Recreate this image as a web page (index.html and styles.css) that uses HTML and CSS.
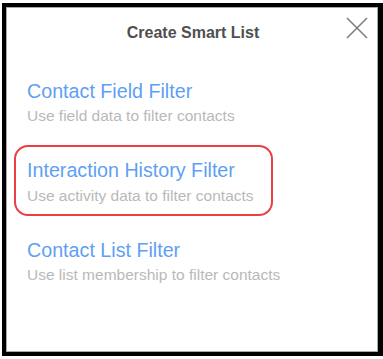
FILE: index.html
```html
<!DOCTYPE html>
<html>
<head>
<meta charset="utf-8">
<link rel="stylesheet" href="styles.css">
</head>
<body>
<div class="frame">
  <div class="dialog">
    <div class="header">
      <h1 class="title">Create Smart List</h1>
      <button class="close" aria-label="Close">
        <svg width="22" height="22" viewBox="0 0 22 22"><path d="M1 1 L21 21 M21 1 L1 21" stroke="#7a7a7a" stroke-width="1.5" fill="none"/></svg>
      </button>
    </div>
    <ul class="options">
      <li class="option">
        <div class="option-title">Contact Field Filter</div>
        <div class="option-desc">Use field data to filter contacts</div>
      </li>
      <li class="option selected">
        <div class="option-title">Interaction History Filter</div>
        <div class="option-desc">Use activity data to filter contacts</div>
      </li>
      <li class="option">
        <div class="option-title">Contact List Filter</div>
        <div class="option-desc">Use list membership to filter contacts</div>
      </li>
    </ul>
  </div>
</div>
</body>
</html>
```

FILE: styles.css
```css
html, body {
  margin: 0;
  padding: 0;
  background: #fff;
}
body {
  font-family: "Liberation Sans", Arial, sans-serif;
  width: 383px;
  height: 359px;
  overflow: hidden;
}
.frame {
  margin: 3px 0 0 2px;
  width: 372px;
  height: 345px;
  border-style: solid;
  border-color: #000;
  border-width: 4px 5px 4px 4px;
}
.dialog {
  position: relative;
  height: 343px;
  border: 1px solid #a8a8a8;
  padding-top: 15px;
  box-sizing: border-box;
  height: 345px;
}
.header {
  height: 20px;
}
.title {
  margin: 0;
  font-size: 16px;
  line-height: 20px;
  font-weight: bold;
  color: #4f4f4f;
  text-align: center;
  padding-left: 2px;
}
.close {
  position: absolute;
  top: 9px;
  right: 9px;
  width: 22px;
  height: 22px;
  padding: 0;
  border: 0;
  background: none;
}
.close svg { display: block; }
.options {
  list-style: none;
  margin: 23px 0 0 7px;
  padding: 0;
  display: flex;
  flex-direction: column;
  gap: 8.7px;
}
.option {
  width: 259px;
  box-sizing: border-box;
  border: 2px solid transparent;
  border-radius: 14px;
  padding: 11px 0 8.4px 11px;
}
.option.selected {
  border-color: #ec3f44;
}
.option-title {
  font-size: 19.7px;
  line-height: 24px;
  color: #5f9ff3;
  white-space: nowrap;
}
.option-desc {
  margin-top: 3.4px;
  font-size: 15.5px;
  line-height: 20px;
  color: #b9b9b9;
  white-space: nowrap;
}
```
